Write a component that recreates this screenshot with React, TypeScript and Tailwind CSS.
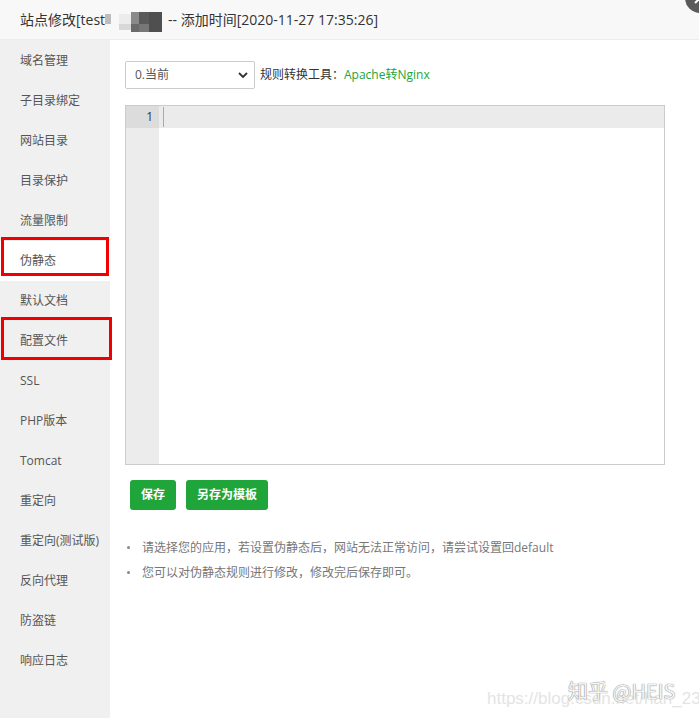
import React from "react";

const items = [
  "域名管理",
  "子目录绑定",
  "网站目录",
  "目录保护",
  "流量限制",
  "伪静态",
  "默认文档",
  "配置文件",
  "SSL",
  "PHP版本",
  "Tomcat",
  "重定向",
  "重定向(测试版)",
  "反向代理",
  "防盗链",
  "响应日志",
];

const font = { fontFamily: '"Open Sans", "Noto Sans CJK SC", sans-serif' };

export default function App() {
  return (
    <div
      className="relative w-[699px] h-[718px] overflow-hidden bg-white"
      style={font}
    >
      {/* title bar */}
      <div className="h-[40px] bg-[#f8f8f8] border-b border-[#ececec] flex items-center pl-[20px] text-[14px] text-[#333]">
        <span>站点修改[test</span>
        <span className="inline-flex h-[28px] w-[57px] items-stretch">
          <span className="w-[6px] flex flex-col">
            <span className="h-[8px]" />
            <span className="h-[10px] bg-[#bdbdbd]" />
          </span>
          <span className="w-[8px]" />
          <span className="w-[12px] flex flex-col">
            <span className="h-[8px]" />
            <span className="h-[10px] bg-[#ececec]" />
            <span className="h-[6px] bg-[#d8d8d8]" />
          </span>
          <span className="w-[8px] flex flex-col">
            <span className="h-[6px]" />
            <span className="h-[12px] bg-[#8a8a8a]" />
            <span className="h-[8px] bg-[#6a6a6a]" />
          </span>
          <span className="w-[10px] flex flex-col">
            <span className="h-[6px]" />
            <span className="h-[12px] bg-[#5a5a5a]" />
            <span className="h-[8px] bg-[#777]" />
          </span>
          <span className="w-[13px] flex flex-col">
            <span className="h-[6px]" />
            <span className="h-[20px] bg-[#4f4f4f]" />
          </span>
        </span>
        <span className="ml-[6px]">-- 添加时间[2020-11-27 17:35:26]</span>
      </div>

      {/* close button */}
      <div className="absolute right-[-16px] top-[-17px] w-[30px] h-[30px] rounded-full bg-[#5a5a5a] flex items-center justify-center">
        <div className="w-[2px] h-[14px] bg-white rotate-45" />
      </div>

      <div className="flex h-[678px]">
        {/* sidebar */}
        <div className="w-[110px] bg-[#f0f0f0] flex flex-col pt-[1px]">
          {items.map((t) => (
            <div
              key={t}
              className={
                "h-[40px] flex items-center pl-[20px] text-[12px] text-[#555] " +
                (t === "伪静态" ? "bg-white" : "")
              }
            >
              {t}
            </div>
          ))}
        </div>

        {/* content */}
        <div className="flex-1 pl-[15px] pt-[21px] flex flex-col">
          <div className="flex items-center h-[28px]">
            <div className="w-[130px] h-[28px] border border-[#cccccc] rounded-[2px] flex items-center justify-between pl-[9px] pr-[5px] text-[12px] text-[#555] bg-white">
              <span>0.当前</span>
              <svg width="12" height="12" viewBox="0 0 12 12">
                <path
                  d="M2 4 L6 8 L10 4"
                  fill="none"
                  stroke="#333"
                  strokeWidth="1.8"
                />
              </svg>
            </div>
            <span className="ml-[5px] text-[12px] text-[#333]">规则转换工具：</span>
            <span className="text-[12px] text-[#20a53a]">Apache转Nginx</span>
          </div>

          {/* editor */}
          <div className="mt-[16px] w-[540px] h-[360px] border border-[#cccccc] flex bg-white">
            <div className="w-[33px] bg-[#ececec] flex flex-col">
              <div className="h-[22px] bg-[#dcdcdc] flex items-center justify-end pr-[6px] text-[12px] text-[#333]">
                1
              </div>
            </div>
            <div className="flex-1 flex flex-col">
              <div className="h-[22px] bg-[#ebebeb] flex items-center pl-[4px]">
                <div className="w-[1px] h-[20px] bg-[#aaa]" />
              </div>
            </div>
          </div>

          {/* buttons */}
          <div className="mt-[15px] flex gap-[10px] pl-[5px]">
            <button className="h-[30px] px-[11px] rounded-[3px] bg-[#20a53a] text-white text-[12px] font-bold">
              保存
            </button>
            <button className="h-[30px] px-[11px] rounded-[3px] bg-[#20a53a] text-white text-[12px] font-bold">
              另存为模板
            </button>
          </div>

          {/* tips */}
          <ul className="mt-[25px] flex flex-col text-[12px] text-[#777]">
            <li className="h-[25px] flex items-center">
              <span className="w-[3px] h-[3px] rounded-full bg-[#888] ml-[2px] mr-[12px]" />
              请选择您的应用，若设置伪静态后，网站无法正常访问，请尝试设置回default
            </li>
            <li className="h-[25px] flex items-center">
              <span className="w-[3px] h-[3px] rounded-full bg-[#888] ml-[2px] mr-[12px]" />
              您可以对伪静态规则进行修改，修改完后保存即可。
            </li>
          </ul>
        </div>
      </div>

      {/* red annotation boxes */}
      <div className="absolute left-[1px] top-[237px] w-[108px] h-[39px] border-[3px] border-[#f00000]" />
      <div className="absolute left-[1px] top-[317px] w-[111px] h-[43px] border-[3px] border-[#f00000]" />

      {/* watermarks */}
      <div
        className="absolute left-[487px] top-[686px] text-[17px] text-[#e4e4e4] whitespace-nowrap"
        style={{ fontFamily: '"Liberation Sans", Arial, sans-serif' }}
      >
        https://blog.csdn.net/han_23
      </div>
      <div
        className="absolute left-[568px] top-[676px] text-[20px] text-[#f4f4f4] whitespace-nowrap"
        style={{
          fontFamily: '"Noto Sans CJK SC", sans-serif',
          textShadow: "0 0 1px #888, 0 0 1px #888",
        }}
      >
        知乎 @HEIS
      </div>
    </div>
  );
}
